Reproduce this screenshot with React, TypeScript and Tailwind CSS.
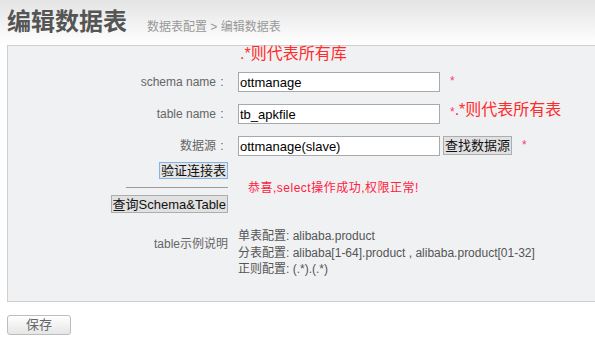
import React from "react";

const F = "font-['Liberation_Sans','Noto_Sans_CJK_SC',sans-serif]";

function Label({ children }: { children: React.ReactNode }) {
  return (
    <div className="w-[220px] shrink-0 flex justify-end text-[12px] leading-[16px] text-[#666]">
      <span>{children}</span>
      <span className="w-[12px] text-center">:</span>
    </div>
  );
}

function Input({ value }: { value: string }) {
  return (
    <input
      readOnly
      value={value}
      className="w-[202px] h-[20px] shrink-0 border border-[#a9a9a9] bg-white px-[1px] text-[13px] leading-[18px] text-black outline-none font-['Liberation_Sans',sans-serif]"
    />
  );
}

function Star() {
  return <span className="text-[12px] leading-[12px] text-[#ff3b6b]">*</span>;
}

export default function App() {
  return (
    <div className={`w-[595px] h-[348px] overflow-hidden bg-white ${F}`}>
      <div className="h-[45px] bg-linear-to-b from-[#e4e4e4] to-white flex items-end pl-[7px] pb-[11px]">
        <div className="text-[24px] leading-[24px] font-bold text-[#555]">编辑数据表</div>
        <div className="ml-[20px] mb-[1px] text-[12px] leading-[12px] text-[#999]">
          数据表配置 &gt; 编辑数据表
        </div>
      </div>

      <div className="ml-[7px] w-[600px] h-[257px] border border-[#cfcfcf] bg-[#f0f1f3] flex flex-col">
        <div className="flex h-[16px]">
          <div className="w-[220px] shrink-0" />
          <div className="ml-[12px] text-[16px] leading-[16px] text-[#ff2a2a]">.*则代表所有库</div>
        </div>

        <div className="flex items-center gap-[10px] mt-[10px] h-[20px]">
          <Label>schema name</Label>
          <div className="flex items-center">
            <Input value="ottmanage" />
            <span className="ml-[10px] mb-[4px]">
              <Star />
            </span>
          </div>
        </div>

        <div className="flex items-center gap-[10px] mt-[12px] h-[20px]">
          <Label>table name</Label>
          <div className="flex items-center">
            <Input value="tb_apkfile" />
            <span className="ml-[10px] mb-[8px] flex items-end leading-[16px]">
              <Star />
              <span className="text-[16px] leading-[16px] text-[#ff2a2a]">.*则代表所有表</span>
            </span>
          </div>
        </div>

        <div className="flex items-center gap-[10px] mt-[12px] h-[20px]">
          <Label>数据源</Label>
          <div className="flex items-center">
            <Input value="ottmanage(slave)" />
            <button className="ml-[3px] mb-[2px] h-[19px] px-[1px] border border-[#adadad] bg-[#e1e1e1] text-[13px] leading-[15px] text-[#111]">
              查找数据源
            </button>
            <span className="ml-[10px] mb-[4px]">
              <Star />
            </span>
          </div>
        </div>

        <div className="flex items-center gap-[20px] mt-[6px]">
          <div className="w-[220px] shrink-0 flex flex-col items-end">
            <button className="h-[17px] px-[1px] border border-[#7eb4ea] bg-[#e5e5e5] text-[13px] leading-[14px] text-[#111]">
              验证连接表
            </button>
            <div className="w-[102px] h-[1px] bg-[#9a9a9a] mt-[8px]" />
            <button className="mt-[7px] h-[18px] px-[1px] border border-[#adadad] bg-[#e1e1e1] text-[13px] leading-[15px] text-[#111]">
              查询Schema&amp;Table
            </button>
          </div>
          <div className="text-[12px] leading-[16px] text-[#ff2040] tracking-[0.5px]">恭喜,select操作成功,权限正常!</div>
        </div>

        <div className="flex gap-[10px] mt-[15px]">
          <div className="w-[220px] shrink-0 text-right text-[12px] leading-[16px] text-[#666] pt-[8px]">
            table示例说明
          </div>
          <div className="text-[12px] leading-[16.5px] text-[#555]">
            <div>单表配置: alibaba.product</div>
            <div>分表配置: alibaba[1-64].product , alibaba.product[01-32]</div>
            <div>正则配置: (.*).(.*)</div>
          </div>
        </div>
      </div>

      <div className="pl-[7px] mt-[10px]">
        <button className="w-[64px] h-[20px] rounded-[3px] border border-[#bdbdbd] bg-linear-to-b from-white to-[#e6e6e6] text-[13px] leading-[16px] text-[#666]">
          保存
        </button>
      </div>
    </div>
  );
}
